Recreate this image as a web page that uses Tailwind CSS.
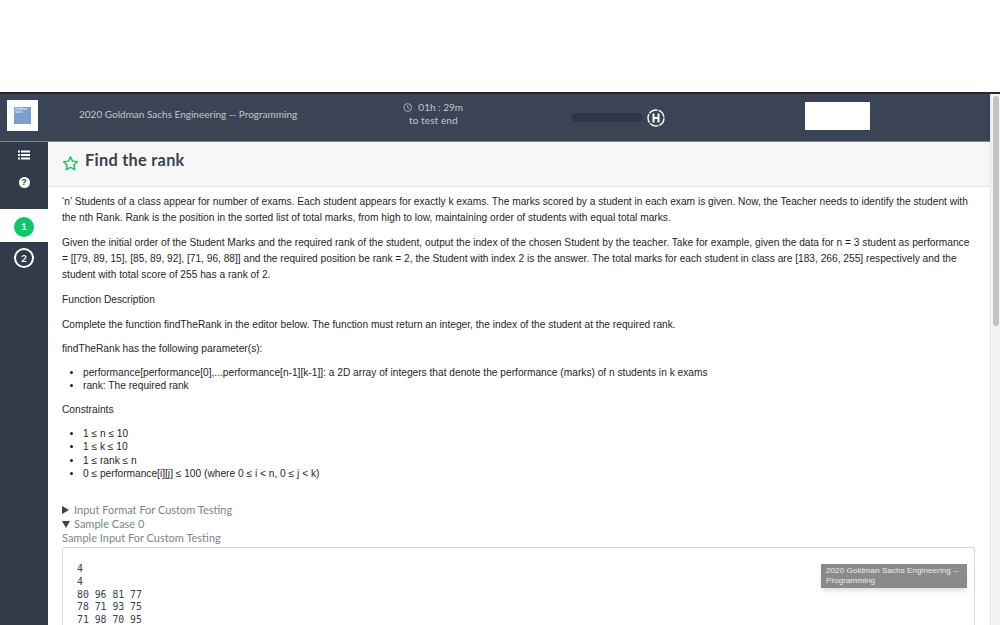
<!DOCTYPE html>
<html lang="en">
<head>
  <meta charset="UTF-8">
  <title>Find the rank</title>
  <script src="https://cdn.jsdelivr.net/npm/@tailwindcss/browser@4"></script>
</head>
<body class="bg-white h-[625px] overflow-hidden font-['Liberation_Sans',sans-serif]">
  <div class="h-[92px]"></div>
  <div class="border-t-2 border-[#23282f] h-[533px] flex">
    <div class="flex-1 min-w-0 flex flex-col">
      <!-- Header -->
      <header class="h-[48px] bg-[#3a4454] flex items-center font-['Lato',sans-serif] text-[#c3c8cf] border-b border-[#7d8590]">
        <div class="w-[45px] h-full flex items-center justify-center">
          <div class="mb-[4px] w-[31px] h-[31px] bg-white flex items-center justify-center">
            <div class="w-[17px] h-[17px] bg-[#7ba0cf] text-white text-[3px] leading-[3px] p-[1px]">Goldman Sachs</div>
          </div>
        </div>
        <div class="ml-[34px] mb-[7px] w-[324px] text-[10px] leading-[14px]">2020 Goldman Sachs Engineering -- Programming</div>
        <div class="w-[60px] mb-[7px] text-[10px] leading-[13.5px]">
          <div class="flex items-center gap-[6px] whitespace-nowrap">
            <svg width="11" height="11" viewBox="0 0 12 12" fill="none" stroke="#c3c8cf" stroke-width="1"><circle cx="6" cy="6" r="5"/><path d="M6 3v3.2l2 1.3"/></svg>
            <span>01h : 29m</span>
          </div>
          <div class="ml-[6px] whitespace-nowrap tracking-[0.1px]">to test end</div>
        </div>
        <div class="ml-[109px] w-[70px] h-[9px] rounded-full bg-[#2b3748]"></div>
        <svg class="ml-[5px]" width="18" height="18" viewBox="0 0 18 18" fill="none" stroke="#fff"><circle cx="9" cy="9" r="8" stroke-width="1.4" stroke-dasharray="9 1"/><path d="M6.5 4.5v9M11.5 4.5v9M6.5 9h5" stroke-width="2"/></svg>
        <div class="ml-[140px] mb-[4px] w-[65px] h-[28px] bg-white"></div>
      </header>
      <div class="flex-1 flex min-h-0">
        <!-- Sidebar -->
        <aside class="w-[48px] bg-[#323b4a] flex flex-col items-center">
          <svg class="mt-[8px]" width="12" height="10" viewBox="0 0 12 10" fill="#fff"><rect x="0" y="0.5" width="2" height="2"/><rect x="3" y="0.5" width="9" height="2"/><rect x="0" y="4" width="2" height="2"/><rect x="3" y="4" width="9" height="2"/><rect x="0" y="7.5" width="2" height="2"/><rect x="3" y="7.5" width="9" height="2"/></svg>
          <div class="mt-[17px] w-[11px] h-[11px] rounded-full bg-white text-[#323b4a] text-[9px] font-bold leading-[11px] text-center">?</div>
          <div class="mt-[21px] w-full h-[33px] bg-white flex items-center justify-center">
            <div class="mt-[2px] w-[20px] h-[20px] rounded-full bg-[#0cc864] text-white text-[10px] font-['Lato',sans-serif] font-bold flex items-center justify-center">1</div>
          </div>
          <div class="mt-[6px] w-[20px] h-[20px] rounded-full border-2 border-white text-white text-[10px] font-['Lato',sans-serif] font-bold flex items-center justify-center">2</div>
        </aside>
        <!-- Main -->
        <main class="flex-1 min-w-0">
          <div class="h-[45px] bg-[#f7f7f7] border-b border-[#e6e6e6] flex items-center pl-[14px] pb-[8px] gap-[6px]">
            <svg width="17" height="17" viewBox="0 0 24 24" fill="none" stroke="#0cc864" stroke-width="2" stroke-linejoin="round" class="mt-[6px]"><path d="M12 2.5l2.9 6.2 6.8.8-5 4.6 1.3 6.7-6-3.3-6 3.3 1.3-6.7-5-4.6 6.8-.8z"/></svg>
            <h1 class="font-['Lato',sans-serif] font-bold text-[16.3px] tracking-[0.3px] text-[#39424e]">Find the rank</h1>
          </div>
          <div class="pl-[14px] pr-[15px] pt-[7px] text-[10.2px] leading-[16px] text-[#1f1f1f]">
            <p>‘n’ Students of a class appear for number of exams. Each student appears for exactly k exams. The marks scored by a student in each exam is given. Now, the Teacher needs to identify the student with the nth Rank. Rank is the position in the sorted list of total marks, from high to low, maintaining order of students with equal total marks.</p>
            <p class="mt-[9px]">Given the initial order of the Student Marks and the required rank of the student, output the index of the chosen Student by the teacher. Take for example, given the data for n = 3 student as performance = [[79, 89, 15], [85, 89, 92], [71, 96, 88]] and the required position be rank = 2, the Student with index 2 is the answer. The total marks for each student in class are [183, 266, 255] respectively and the student with total score of 255 has a rank of 2.</p>
            <p class="mt-[9px]">Function Description</p>
            <p class="mt-[9px]">Complete the function findTheRank in the editor below. The function must return an integer, the index of the student at the required rank.</p>
            <p class="mt-[8px]">findTheRank has the following parameter(s):</p>
            <ul class="mt-[8.5px] list-disc pl-[21px] leading-[13.3px]">
              <li>performance[performance[0],...performance[n-1][k-1]]: a 2D array of integers that denote the performance (marks) of n students in k exams</li>
              <li>rank: The required rank</li>
            </ul>
            <p class="mt-[9.5px]">Constraints</p>
            <ul class="mt-[9.5px] list-disc pl-[21px] leading-[13.3px]">
              <li>1 ≤ n ≤ 10</li>
              <li>1 ≤ k ≤ 10</li>
              <li>1 ≤ rank ≤ n</li>
              <li>0 ≤ performance[i][j] ≤ 100 (where 0 ≤ i &lt; n, 0 ≤ j &lt; k)</li>
            </ul>
            <div class="mt-[23px] font-['Lato',sans-serif] text-[11px] leading-[14px] text-[#7a8490]">
              <div class="flex items-center gap-[5px]"><span class="w-0 h-0 border-y-[4px] border-y-transparent border-l-[7px] border-l-[#39424e]"></span>Input Format For Custom Testing</div>
              <div class="flex items-center gap-[4px]"><span class="w-0 h-0 border-x-[4px] border-x-transparent border-t-[7px] border-t-[#39424e]"></span>Sample Case 0</div>
              <div>Sample Input For Custom Testing</div>
            </div>
            <div class="relative mt-[2px] h-[120px] border border-[#d5d8de] rounded-[2px] pt-[15px] pl-[14px] font-['DejaVu_Sans_Mono',monospace] text-[9.8px] leading-[12.7px] text-[#39424e]">
              <div>4</div>
              <div>4</div>
              <div>80 96 81 77</div>
              <div>78 71 93 75</div>
              <div>71 98 70 95</div>
              <div class="absolute right-[7px] top-[16px] w-[146px] px-[5px] py-[2px] bg-[#8a8a8a] text-[#eee] font-['Liberation_Sans',sans-serif] text-[8px] leading-[10px] tracking-[0.1px] shadow-md">2020 Goldman Sachs Engineering -- Programming</div>
            </div>
          </div>
        </main>
      </div>
    </div>
    <!-- Scrollbar -->
    <div class="w-[10px] bg-[#f4f4f4] border-l border-[#e4e4e4] flex justify-center pt-[2px]">
      <div class="w-[6px] h-[230px] bg-[#c2c2c2] rounded-full"></div>
    </div>
  </div>
</body>
</html>
